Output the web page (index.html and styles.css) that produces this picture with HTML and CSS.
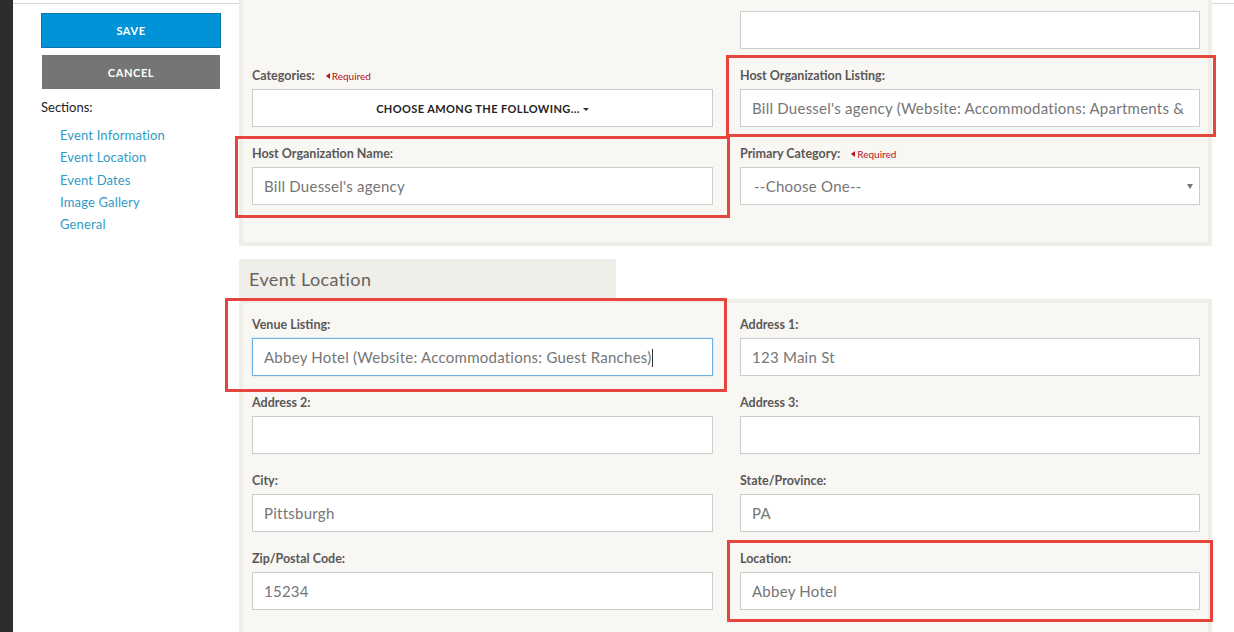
FILE: index.html
```html
<!DOCTYPE html>
<html lang="en">
<head>
    <meta charset="UTF-8">
    <meta name="viewport" content="width=device-width, initial-scale=1.0">
    <title>Edit Event</title>
    <link rel="stylesheet" href="styles.css">
</head>
<body>
    <div class="page">
        <div class="rail"></div>
        <div class="content">
            <aside class="sidebar">
                <button class="btn btn-save">SAVE</button>
                <button class="btn btn-cancel">CANCEL</button>
                <p class="sections-title">Sections:</p>
                <ul class="sections">
                    <li><a href="#">Event Information</a></li>
                    <li><a href="#">Event Location</a></li>
                    <li><a href="#">Event Dates</a></li>
                    <li><a href="#">Image Gallery</a></li>
                    <li><a href="#">General</a></li>
                </ul>
            </aside>

            <main class="main">
                <div class="panel panel-info">
                    <div class="fields">
                        <div class="field"></div>
                        <div class="field">
                            <label class="label"></label>
                            <input class="input" type="text" value="">
                        </div>

                        <div class="field">
                            <label class="label">Categories: <span class="required">Required</span></label>
                            <button class="choose">CHOOSE AMONG THE FOLLOWING... <span class="caret"></span></button>
                        </div>
                        <div class="field marked mark-listing">
                            <label class="label">Host Organization Listing:</label>
                            <input class="input" type="text" value="Bill Duessel's agency (Website: Accommodations: Apartments &amp; Condos)">
                        </div>

                        <div class="field marked mark-name">
                            <label class="label">Host Organization Name:</label>
                            <input class="input" type="text" value="Bill Duessel's agency">
                        </div>
                        <div class="field">
                            <label class="label">Primary Category: <span class="required">Required</span></label>
                            <div class="select-wrap">
                                <select class="input select">
                                    <option>--Choose One--</option>
                                </select>
                            </div>
                        </div>
                    </div>
                </div>

                <h2 class="tab">Event Location</h2>
                <div class="panel panel-location">
                    <div class="fields">
                        <div class="field marked mark-venue">
                            <label class="label">Venue Listing:</label>
                            <div class="input input-focus">Abbey Hotel (Website: Accommodations: Guest Ranches)<span class="cursor"></span></div>
                        </div>
                        <div class="field">
                            <label class="label">Address 1:</label>
                            <input class="input" type="text" value="123 Main St">
                        </div>

                        <div class="field">
                            <label class="label">Address 2:</label>
                            <input class="input" type="text" value="">
                        </div>
                        <div class="field">
                            <label class="label">Address 3:</label>
                            <input class="input" type="text" value="">
                        </div>

                        <div class="field">
                            <label class="label">City:</label>
                            <input class="input" type="text" value="Pittsburgh">
                        </div>
                        <div class="field">
                            <label class="label">State/Province:</label>
                            <input class="input" type="text" value="PA">
                        </div>

                        <div class="field">
                            <label class="label">Zip/Postal Code:</label>
                            <input class="input" type="text" value="15234">
                        </div>
                        <div class="field marked mark-location">
                            <label class="label">Location:</label>
                            <input class="input" type="text" value="Abbey Hotel">
                        </div>
                    </div>
                </div>
            </main>
        </div>
    </div>
</body>
</html>
```

FILE: styles.css
```css
* {
    margin: 0;
    padding: 0;
    box-sizing: border-box;
}

html, body {
    height: 100%;
    overflow: hidden;
}

body {
    font-family: 'Lato', 'Liberation Sans', sans-serif;
    background-color: #fff;
    color: #333;
}

.page {
    display: flex;
    height: 100%;
}

.rail {
    width: 13px;
    flex-shrink: 0;
    background-color: #2d2d2d;
}

.content {
    flex: 1;
    display: flex;
    align-items: flex-start;
    margin-top: 3px;
    border-top: 1px solid #d6d6d6;
}

/* sidebar */

.sidebar {
    width: 226px;
    flex-shrink: 0;
    padding: 9px 0 0 28px;
}

.btn {
    display: block;
    width: 180px;
    border: none;
    color: #fff;
    font-family: 'Lato', sans-serif;
    font-weight: 700;
    font-size: 11px;
    letter-spacing: 0.6px;
    cursor: pointer;
}

.btn-save {
    height: 35px;
    background-color: #0093d8;
    border: 1px solid #0b77ad;
}

.btn-cancel {
    width: 178px;
    height: 34px;
    margin: 7px 1px 0;
    background-color: #757575;
}

.sections-title {
    margin-top: 10px;
    font-size: 13px;
    line-height: 16px;
    color: #1c1c1c;
}

.sections {
    list-style: none;
    margin-top: 9px;
    padding-left: 19px;
}

.sections li {
    line-height: 22.3px;
    font-size: 13px;
    letter-spacing: 0.15px;
}

.sections a {
    color: #2f9bc4;
    text-decoration: none;
}

/* main form */

.main {
    width: 973px;
    flex-shrink: 0;
}

.panel {
    background-color: #f8f7f3;
    border: 4px solid #efede8;
    padding: 13px 8px 37px 9px;
}

.panel-info {
    margin-top: -31px;
}

.panel-location {
    padding-top: 14px;
    padding-bottom: 60px;
}

.fields {
    display: grid;
    grid-template-columns: 461px 460px;
    column-gap: 27px;
    row-gap: 19px;
}

.field {
    position: relative;
}

.label {
    display: block;
    height: 16px;
    margin-bottom: 5px;
    font-size: 12.5px;
    line-height: 16px;
    font-weight: 700;
    color: #5a5857;
}

.required {
    margin-left: 8px;
    font-size: 10px;
    font-weight: 400;
    color: #b3121d;
}

.required::before {
    content: '';
    display: inline-block;
    margin-right: 2px;
    border-top: 3px solid transparent;
    border-bottom: 3px solid transparent;
    border-right: 4px solid #b3121d;
    vertical-align: 1px;
}

.input {
    display: block;
    width: 100%;
    height: 38px;
    padding: 0 11px;
    background-color: #fff;
    border: 1px solid #cdcdcd;
    font-family: 'Lato', sans-serif;
    font-size: 15px;
    letter-spacing: 0.25px;
    line-height: 36px;
    color: #767676;
    outline: none;
    white-space: nowrap;
    overflow: hidden;
}

.input-focus {
    border-color: #6cb0e8;
    box-shadow: 0 0 2px rgba(102, 175, 233, 0.4);
}

.cursor {
    display: inline-block;
    width: 1px;
    height: 18px;
    margin-left: 1px;
    background-color: #333;
    vertical-align: -4px;
}

.choose {
    display: block;
    width: 100%;
    height: 38px;
    background-color: #fff;
    border: 1px solid #cdcdcd;
    font-family: 'Lato', sans-serif;
    font-size: 11px;
    font-weight: 700;
    letter-spacing: 0.4px;
    color: #232323;
}

.caret {
    display: inline-block;
    border-left: 3px solid transparent;
    border-right: 3px solid transparent;
    border-top: 3px solid #333;
    vertical-align: 2px;
}

.select-wrap {
    position: relative;
}

.select {
    appearance: none;
    -webkit-appearance: none;
    padding-left: 13px;
    border-radius: 0;
}

.select-wrap::after {
    content: '';
    position: absolute;
    right: 7px;
    top: 17px;
    border-left: 3px solid transparent;
    border-right: 3px solid transparent;
    border-top: 5px solid #777;
}

.tab {
    width: 377px;
    height: 40px;
    margin-top: 13px;
    padding-left: 10px;
    background-color: #efeee9;
    font-size: 18px;
    font-weight: 400;
    letter-spacing: 0.4px;
    line-height: 40px;
    color: #656260;
}

/* red review marks drawn over the fields */

.marked::after {
    content: '';
    position: absolute;
    border: 3px solid #e5453d;
    pointer-events: none;
}

.mark-listing::after {
    top: -13px;
    right: -16px;
    bottom: -10px;
    left: -14px;
}

.mark-name::after {
    top: -10px;
    right: -17px;
    bottom: -13px;
    left: -17px;
}

.mark-venue::after {
    top: -19px;
    right: -14px;
    bottom: -16px;
    left: -27px;
}

.mark-location::after {
    top: -11px;
    right: -13px;
    bottom: -12px;
    left: -13px;
}
```
